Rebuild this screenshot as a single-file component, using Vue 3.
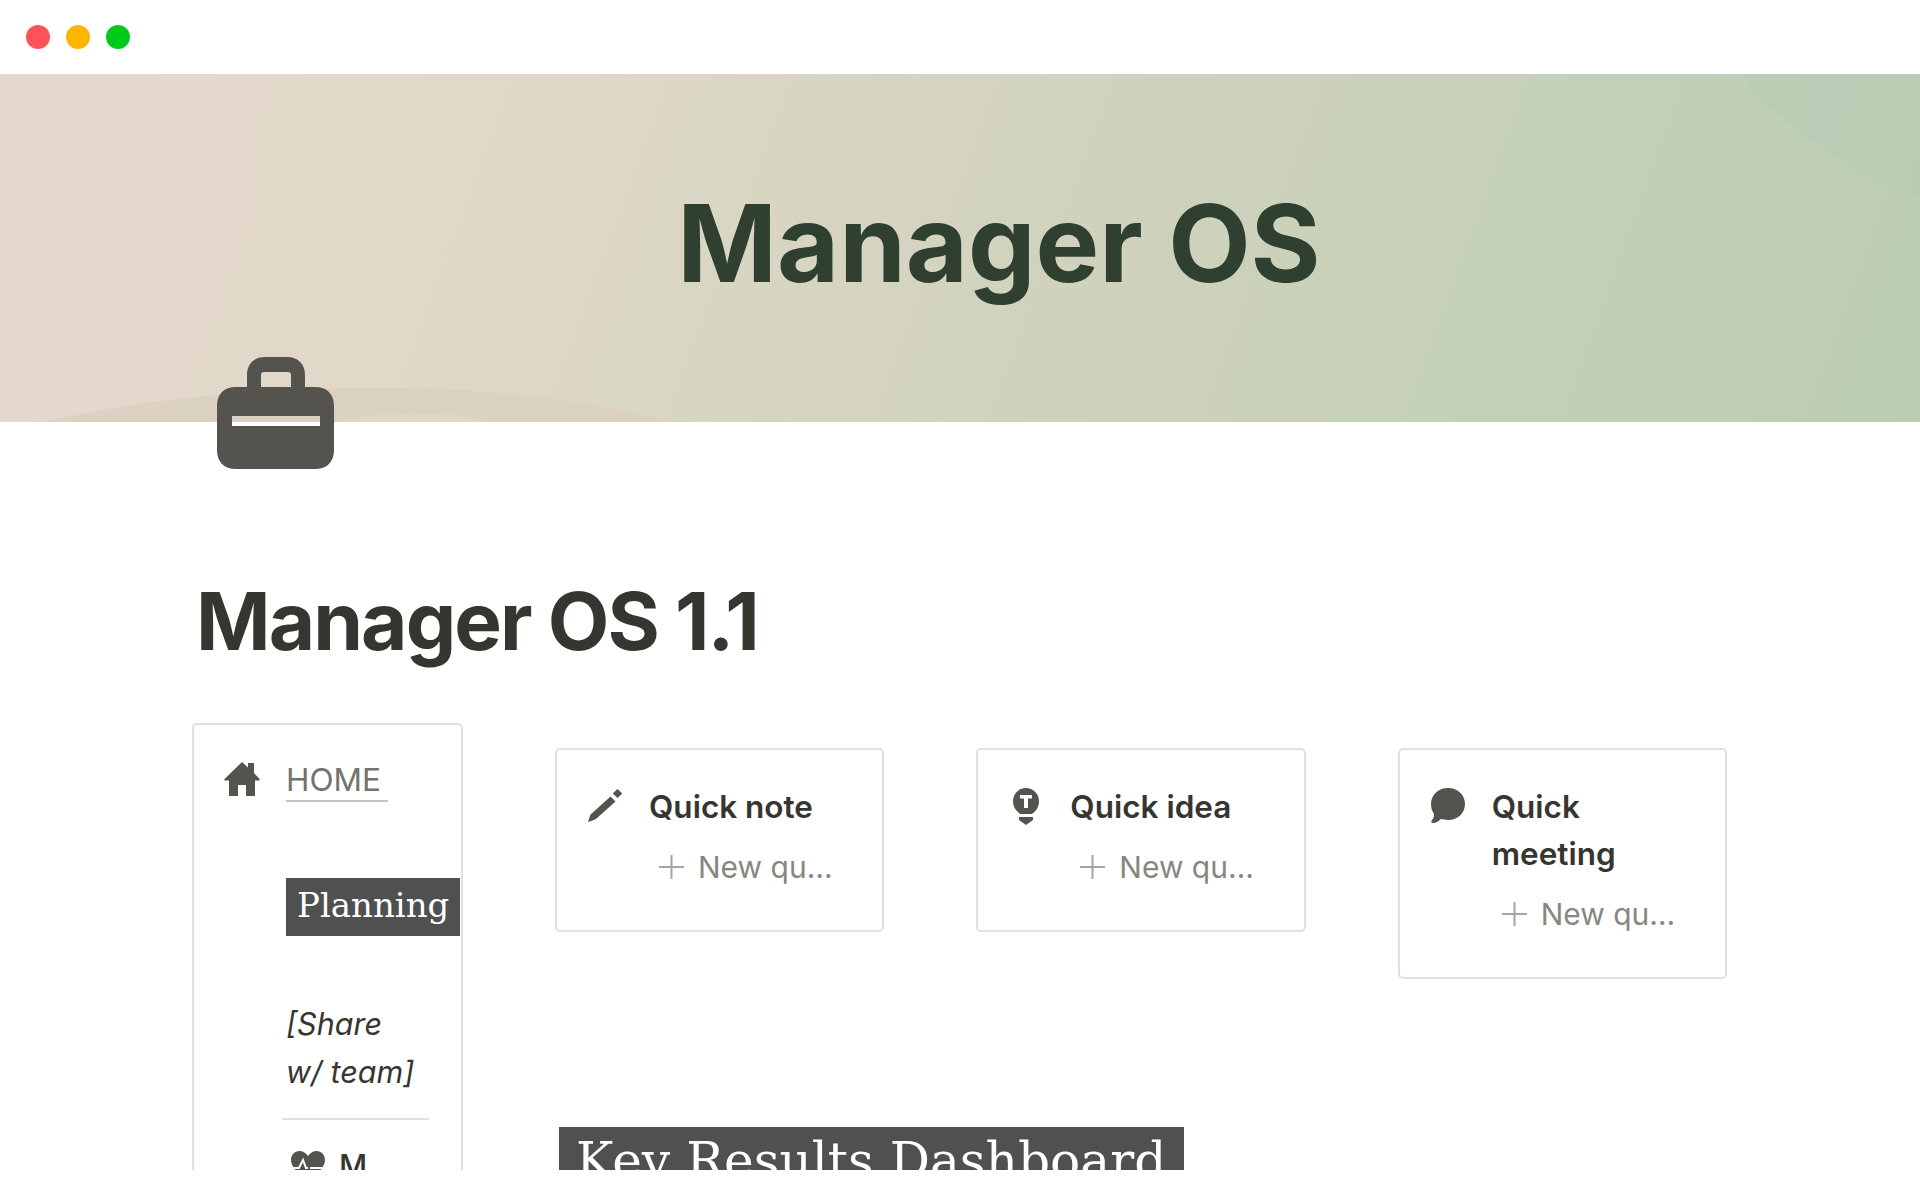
<script setup>
const cards = [
  { id: 'note', title: 'Quick note', icon: 'pencil' },
  { id: 'idea', title: 'Quick idea', icon: 'bulb' },
  { id: 'meeting', title: 'Quick meeting', icon: 'chat' }
]
</script>

<template>
  <div class="page">
    <header class="titlebar">
      <span class="dot red"></span>
      <span class="dot yellow"></span>
      <span class="dot green"></span>
    </header>

    <section class="banner">
      <svg class="banner-art" viewBox="0 0 1920 348" preserveAspectRatio="none" aria-hidden="true">
        <path d="M45 348 C150 322 280 314 380 314 C480 314 590 326 672 348 Z" fill="#d9d0c1" opacity="0.8" />
        <path d="M335 348 C360 340 400 339 420 339 C445 339 470 342 490 348 Z" fill="#dfd7c8" opacity="0.8" />
        <path d="M1740 0 C1775 50 1850 95 1920 124 L1920 0 Z" fill="#b6cbb4" opacity="0.6" />
      </svg>
      <h2 class="banner-title">Manager OS</h2>
    </section>

    <svg class="briefcase" viewBox="0 0 117 112" aria-hidden="true">
      <path fill-rule="evenodd" fill="#55534e" d="M30 30 V18 C30 7 37 0 48 0 H70 C81 0 88 7 88 18 V30 H98 C110 30 117 37 117 49 V93 C117 105 110 112 98 112 H19 C7 112 0 105 0 93 V49 C0 37 7 30 19 30 Z M44 30 H74 V18 C74 16 73 15 71 15 H47 C45 15 44 16 44 18 Z M15 59 V69 H103 V59 Z" />
    </svg>

    <main class="content">
      <h1 class="page-title">Manager OS 1.1</h1>

      <div class="columns">
        <aside class="nav-card">
          <div class="home-row">
            <svg class="home-icon" viewBox="0 0 36 34" aria-hidden="true">
              <path fill="#55534e" d="M18 0 L24 5.5 V1 H30 V11 L36 17.5 L35 18.5 H31 V34 H22 V23 H14 V34 H5 V18.5 H1 L0 17.5 Z" />
            </svg>
            <span class="home-link">HOME</span>
          </div>
          <div class="planning">Planning</div>
          <p class="share">[Share w/ team]</p>
          <div class="divider"></div>
          <div class="metric-row">
            <svg class="heart-icon" viewBox="0 0 34 30" aria-hidden="true">
              <path fill="#55534e" d="M17 5 C14 1 11 0 8.5 0 C3.5 0 0 4 0 9 C0 15 5 21 17 30 C29 21 34 15 34 9 C34 4 30.5 0 25.5 0 C23 0 20 1 17 5 Z" />
              <path fill="none" stroke="#fff" stroke-width="2" d="M0 17 H8 L12 9 L15 17 H17 M19 17 H34" />
            </svg>
            <span class="metric-label">M</span>
          </div>
        </aside>

        <div class="main-col">
          <div class="quick-row">
            <article v-for="card in cards" :key="card.id" class="quick-card">
              <div class="quick-head">
                <svg v-if="card.icon === 'pencil'" class="quick-icon" viewBox="0 0 36 36" aria-hidden="true">
                  <path fill="#55534e" d="M0 34 Q1 30 2.5 26.5 L22.5 8.5 L27.5 13.5 L8 31 Q4 33 0 34 Z" />
                  <path fill="#55534e" d="M29.5 1 L34.3 5.5 L29.5 10 L24.7 5.5 Z" />
                </svg>
                <svg v-else-if="card.icon === 'bulb'" class="quick-icon" viewBox="0 0 36 36" aria-hidden="true">
                  <path fill="#55534e" d="M11 26 C7 23 4 19 4 13 C4 6 10 0 17 0 C24 0 30 6 30 13 C30 19 27 23 23 26 Z" />
                  <path fill="#55534e" d="M10 29 H24 V32 L17 37 L10 32 Z" />
                  <path fill="#fff" d="M11 7 H23 V10.5 H19 V20 H15 V10.5 H11 Z" />
                </svg>
                <svg v-else class="quick-icon" viewBox="0 0 36 36" aria-hidden="true">
                  <path fill="#55534e" d="M17 0 C27 0 34 7 34 16 C34 25 27 32 17 32 C14 32 12 31 10 31 C8 33 5 35 2 35 C0 35 0 33 1 32 C3 30 3 28 3 26 C1 23 0 20 0 16 C0 7 7 0 17 0 Z" />
                </svg>
                <h3 class="quick-title">{{ card.title }}</h3>
              </div>
              <div class="new-row">
                <svg class="plus" viewBox="0 0 25 24" aria-hidden="true">
                  <path stroke="#a5a49f" stroke-width="2" fill="none" d="M12.5 0 V24 M0 12 H25" />
                </svg>
                <span class="new-label">New qu…</span>
              </div>
            </article>
          </div>
          <h2 class="dashboard">Key Results Dashboard</h2>
        </div>
      </div>
    </main>
  </div>
</template>

<style>
html, body { margin: 0; background: #fff; }
</style>

<style scoped>
.page {
  position: relative;
  height: 1170px;
  overflow: hidden;
  background: #fff;
  color: #37352f;
  font-family: Inter, "Liberation Sans", sans-serif;
}
.titlebar {
  height: 74px;
  display: flex;
  align-items: center;
  gap: 16px;
  padding-left: 26px;
  box-sizing: border-box;
}
.dot { width: 24px; height: 24px; border-radius: 50%; }
.red { background: #ff5257; }
.yellow { background: #ffb500; }
.green { background: #00cb1c; }

.banner {
  position: relative;
  height: 348px;
  display: flex;
  align-items: center;
  justify-content: center;
  padding: 0 0 10px 78px;
  box-sizing: border-box;
  overflow: hidden;
  background: linear-gradient(110deg, #e5d9cd 0%, #e2d8ca 20%, #d9d6c4 38%, #cfd2bc 58%, #c5d0ba 76%, #bacdb3 100%);
}
.banner-art { position: absolute; inset: 0; width: 100%; height: 100%; }
.banner-title {
  position: relative;
  margin: 0;
  font-size: 107px;
  line-height: 1.2;
  font-weight: 700;
  color: #2f4030;
}
.briefcase {
  position: absolute;
  left: 217px;
  top: 357px;
  width: 117px;
  height: 112px;
}

.content { padding: 0 0 0 192px; }
.page-title {
  margin: 0;
  padding: 151px 0 0 4px;
  height: 150px;
  font-size: 80px;
  line-height: 96px;
  font-weight: 700;
  letter-spacing: -1.9px;
  color: #37352f;
}
.columns {
  display: flex;
  align-items: flex-start;
  gap: 92px;
}
.nav-card {
  width: 271px;
  height: 700px;
  box-sizing: border-box;
  border: 2px solid #e0e0e0;
  border-radius: 5px;
  padding: 0;
  flex: none;
}
.home-row {
  display: flex;
  align-items: flex-start;
  padding: 37px 0 0 30px;
}
.home-icon { width: 36px; height: 34px; flex: none; }
.home-link {
  margin: 0 0 0 26px;
  width: 102px;
  height: 38px;
  line-height: 36px;
  font-size: 31.5px;
  color: #73726c;
  border-bottom: 2px solid #c4c4c2;
  box-sizing: content-box;
}
.planning {
  margin: 76px 0 0 92px;
  width: 174px;
  height: 58px;
  line-height: 54px;
  padding-left: 11px;
  box-sizing: border-box;
  background: #505050;
  color: #fff;
  font-family: "DejaVu Serif", serif;
  font-size: 34px;
}
.share {
  margin: 64px 0 0 92px;
  width: 133px;
  font-size: 30.5px;
  line-height: 48px;
  font-style: italic;
  color: #37352f;
}
.divider {
  margin: 22px 0 0 88px;
  width: 147px;
  height: 2px;
  background: #e0e0e0;
}
.metric-row {
  display: flex;
  align-items: flex-start;
  padding: 31px 0 0 97px;
}
.heart-icon { width: 34px; height: 30px; flex: none; }
.metric-label {
  margin: -3px 0 0 14px;
  font-size: 31px;
  line-height: 36px;
  font-weight: 500;
}
.main-col { flex: none; width: 1172px; padding-top: 25px; }
.quick-row { display: flex; align-items: flex-start; gap: 92px; }
.quick-card {
  width: 329.5px;
  box-sizing: border-box;
  border: 2px solid #e0e0e0;
  border-radius: 5px;
  padding: 33px 30px 39px 31px;
}
.quick-head { display: flex; align-items: flex-start; }
.quick-icon { width: 36px; height: 36px; flex: none; margin: 5px 25px 0 0; overflow: visible; }
.quick-title {
  margin: 0;
  font-size: 31.5px;
  line-height: 47px;
  font-weight: 600;
  color: #37352f;
}
.new-row {
  display: flex;
  align-items: center;
  margin: 13px 0 0 71px;
  height: 48px;
}
.plus { width: 25px; height: 24px; flex: none; margin-right: 14px; }
.new-label { font-size: 30px; color: #87867f; white-space: nowrap; }
.dashboard {
  margin: 148px 0 0 4px;
  width: 625px;
  height: 100px;
  box-sizing: border-box;
  padding: 0 0 0 17px;
  background: #505050;
  color: #fff;
  font-family: "DejaVu Serif", serif;
  font-weight: 400;
  font-size: 50.2px;
  line-height: 68px;
  white-space: nowrap;
}
</style>
